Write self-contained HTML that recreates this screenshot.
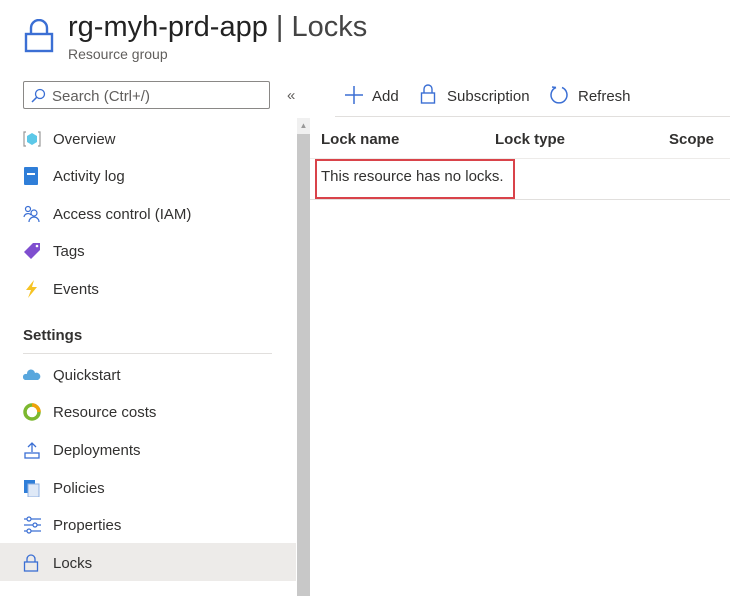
<!DOCTYPE html>
<html><head><style>
*{margin:0;padding:0;box-sizing:border-box}
body{width:730px;height:596px;overflow:hidden;background:#fff;font-family:"Liberation Sans",sans-serif;color:#323130;position:relative}
.a{position:absolute}
.item{position:absolute;left:0;width:296px;height:38px;font-size:15px;line-height:42px}
.item span{position:absolute;left:53px}
.item svg{position:absolute;left:23px;top:11px}
</style></head><body>
<svg class="a" style="left:24px;top:19px" width="30" height="34" viewBox="0 0 30 34"><path d="M7 15V9a8 8 0 0 1 16 0v6" fill="none" stroke="#3b6fd4" stroke-width="2.4"/><rect x="2" y="15" width="26" height="17" fill="none" stroke="#3b6fd4" stroke-width="2.4"/></svg>
<div class="a" style="left:68px;top:11px;font-size:29px;color:#222">rg-myh-prd-app <span style="color:#444">| Locks</span></div>
<div class="a" style="left:68px;top:46px;font-size:14px;color:#605e5c">Resource group</div>
<div class="a" style="left:23px;top:81px;width:247px;height:28px;border:1px solid #8a8886;border-radius:2px"></div>
<svg class="a" style="left:30px;top:88px" width="16" height="16" viewBox="0 0 16 16"><circle cx="10" cy="6" r="4.5" fill="none" stroke="#3b6fd4" stroke-width="1.3"/><path d="M6.8 9.2L2 14" stroke="#3b6fd4" stroke-width="1.5"/></svg>
<div class="a" style="left:52px;top:88px;font-size:15px;color:#605e5c">Search (Ctrl+/)</div>
<div class="a" style="left:287px;top:87px;font-size:15px;color:#605e5c">«</div>
<div class="item" style="top:119px"><svg width="18" height="18" viewBox="0 0 18 18"><path d="M3 2H1v14h2M15 2h2v14h-2" fill="none" stroke="#999" stroke-width="1.2"/><path d="M9 3l5 3v6l-5 3-5-3V6z" fill="#5cc8e8"/></svg><span>Overview</span></div>
<div class="item" style="top:156px"><svg width="16" height="18" viewBox="0 0 16 18"><rect x="1" y="0" width="14" height="18" rx="1" fill="#2f7ed8"/><rect x="4" y="6" width="8" height="2" fill="#fff"/></svg><span>Activity log</span></div>
<div class="item" style="top:194px"><svg width="18" height="18" viewBox="0 0 18 18"><circle cx="5" cy="4" r="2.5" fill="none" stroke="#3b6fd4" stroke-width="1.2"/><path d="M1 12a4 4 0 0 1 7-2" fill="none" stroke="#3b6fd4" stroke-width="1.2"/><circle cx="11" cy="8" r="3" fill="none" stroke="#3b6fd4" stroke-width="1.2"/><path d="M6 17a5 5 0 0 1 10 0" fill="none" stroke="#3b6fd4" stroke-width="1.2"/></svg><span>Access control (IAM)</span></div>
<div class="item" style="top:231px"><svg width="18" height="18" viewBox="0 0 18 18"><path d="M10 1h7v7l-9 9-7-7z" fill="#7f4ecf"/><circle cx="14" cy="4" r="1.3" fill="#fff"/></svg><span>Tags</span></div>
<div class="item" style="top:269px"><svg width="18" height="18" viewBox="0 0 18 18"><path d="M11 0L3 10h5l-3 8 9-11H9z" fill="#f6c324"/></svg><span>Events</span></div>
<div class="a" style="left:23px;top:327px;font-size:15px;font-weight:bold;color:#323130">Settings</div>
<div class="a" style="left:23px;top:353px;width:249px;height:1px;background:#e1dfdd"></div>
<div class="item" style="top:355px"><svg width="18" height="18" viewBox="0 0 18 18"><path d="M2 14a3 3 0 0 1 2-6 4 4 0 0 1 8-1 3.5 3.5 0 0 1 3 7z" fill="#59a7dd"/></svg><span>Quickstart</span></div>
<div class="item" style="top:392px"><svg width="18" height="18" viewBox="0 0 18 18"><circle cx="9" cy="9" r="7" fill="none" stroke="#7cb82f" stroke-width="3.5"/><path d="M9 2a7 7 0 0 1 7 7" fill="none" stroke="#f0a30a" stroke-width="3.5"/></svg><span>Resource costs</span></div>
<div class="item" style="top:430px"><svg width="18" height="18" viewBox="0 0 18 18"><path d="M9 11V2M5 6l4-4 4 4" fill="none" stroke="#3b6fd4" stroke-width="1.3"/><rect x="2" y="12" width="14" height="5" fill="none" stroke="#3b6fd4" stroke-width="1.3"/></svg><span>Deployments</span></div>
<div class="item" style="top:468px"><svg width="18" height="18" viewBox="0 0 18 18"><rect x="1" y="1" width="11" height="13" fill="#2f7ed8"/><rect x="5" y="5" width="11" height="13" fill="#dfe9f7" stroke="#8fb0e0"/></svg><span>Policies</span></div>
<div class="item" style="top:505px"><svg width="18" height="18" viewBox="0 0 18 18" fill="none" stroke="#3b6fd4" stroke-width="1.2"><path d="M1 3h17M1 9h17M1 15h17"/><circle cx="6" cy="3" r="2" fill="#fff"/><circle cx="12" cy="9" r="2" fill="#fff"/><circle cx="6" cy="15" r="2" fill="#fff"/></svg><span>Properties</span></div>
<div class="item" style="top:543px;background:#edebe9"><svg width="16" height="18" viewBox="0 0 16 18"><path d="M4 8V5a4 4 0 0 1 8 0v3" fill="none" stroke="#3b6fd4" stroke-width="1.3"/><rect x="1.5" y="8" width="13" height="9" fill="none" stroke="#3b6fd4" stroke-width="1.3"/></svg><span>Locks</span></div>
<div class="a" style="left:297px;top:118px;width:13px;height:478px;background:#c8c8c8"></div>
<div class="a" style="left:297px;top:118px;width:13px;height:16px;background:#f0f0f0;font-size:8px;color:#999;text-align:center;line-height:16px">▲</div>
<svg class="a" style="left:344px;top:85px" width="20" height="20" viewBox="0 0 20 20"><path d="M10 1v18M1 10h18" stroke="#3b6fd4" stroke-width="1.5"/></svg>
<div class="a" style="left:372px;top:88px;font-size:15px">Add</div>
<svg class="a" style="left:420px;top:84px" width="16" height="20" viewBox="0 0 16 20"><path d="M4 9V5a4 4 0 0 1 8 0v4" fill="none" stroke="#3b6fd4" stroke-width="1.4"/><rect x="1.5" y="9" width="13" height="10" fill="none" stroke="#3b6fd4" stroke-width="1.4"/></svg>
<div class="a" style="left:447px;top:88px;font-size:15px">Subscription</div>
<svg class="a" style="left:549px;top:85px" width="20" height="20" viewBox="0 0 20 20"><path d="M7 2.5A8 8 0 1 0 13 2.5" fill="none" stroke="#3b6fd4" stroke-width="1.5"/><path d="M7 2.5L3 2" stroke="#3b6fd4" stroke-width="1.5"/></svg>
<div class="a" style="left:578px;top:88px;font-size:15px">Refresh</div>
<div class="a" style="left:335px;top:116px;width:395px;height:1px;background:#e1dfdd"></div>
<div class="a" style="left:321px;top:131px;font-size:15px;font-weight:bold">Lock name</div>
<div class="a" style="left:495px;top:131px;font-size:15px;font-weight:bold">Lock type</div>
<div class="a" style="left:669px;top:131px;font-size:15px;font-weight:bold">Scope</div>
<div class="a" style="left:310px;top:158px;width:420px;height:1px;background:#edebe9"></div>
<div class="a" style="left:310px;top:199px;width:420px;height:1px;background:#e1dfdd"></div>
<div class="a" style="left:321px;top:168px;font-size:15px">This resource has no locks.</div>
<div class="a" style="left:315px;top:159px;width:200px;height:40px;border:2px solid #d9434a"></div>
</body></html>
